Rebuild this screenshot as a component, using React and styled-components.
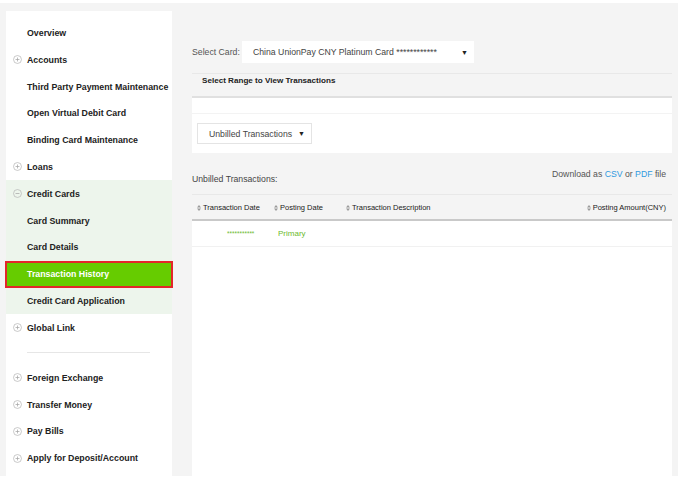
import React from 'react';
import styled, { createGlobalStyle } from 'styled-components';

const GlobalStyle = createGlobalStyle`
	html, body {
		margin: 0;
		padding: 0;
		background: #ffffff;
		font-family: "Liberation Sans", Arial, sans-serif;
	}
`;

const Page = styled.div`
	display: flex;
	box-sizing: border-box;
	margin-top: 3px;
	width: 678px;
	height: 473px;
	padding: 8px 0 0 6px;
	background: #f4f4f4;
`;

const Sidebar = styled.nav`
	width: 166px;
	flex-shrink: 0;
	background: #ffffff;
	padding-top: 8.6px;
`;

const Group = styled.div`
	background: ${p => (p.$open ? '#edf5ec' : 'transparent')};
`;

const NavItem = styled.div`
	display: flex;
	align-items: center;
	box-sizing: border-box;
	height: 26.8px;
	font-size: 8.8px;
	font-weight: bold;
	color: ${p => (p.$active ? '#ffffff' : '#222222')};
	background: ${p => (p.$active ? '#66cc00' : 'transparent')};
	border: ${p => (p.$active ? '2px solid #e3262a' : 'none')};
	margin: ${p => (p.$active ? '0 -1px' : '0')};
	padding-left: ${p => (p.$active ? '6px' : '7px')};
`;

const IconSlot = styled.span`
	display: inline-flex;
	align-items: center;
	width: 14px;
	flex-shrink: 0;
`;

const Divider = styled.div`
	height: 23.2px;
	display: flex;
	align-items: center;
	padding: 0 22px 0 21px;

	&::after {
		content: '';
		flex: 1;
		height: 1px;
		background: #e6e6e6;
	}
`;

const Main = styled.main`
	flex: 1;
	padding: 30px 6px 0 20px;
	display: flex;
	flex-direction: column;
`;

const CardRow = styled.div`
	display: flex;
	align-items: center;
`;

const Label = styled.span`
	width: 50px;
	font-size: 8.7px;
	color: #555555;
`;

const SelectBox = styled.div`
	display: flex;
	align-items: center;
	justify-content: space-between;
	box-sizing: border-box;
	width: ${p => p.$width}px;
	height: ${p => p.$height}px;
	padding: 0 6px 0 11px;
	background: #ffffff;
	border: ${p => (p.$bordered ? '1px solid #e4e4e4' : 'none')};
	font-size: 8.7px;
	color: #444444;
`;

const Caret = styled.span`
	font-size: 7px;
	color: #222222;
`;

const RangePanel = styled.section`
	margin-top: 10px;
	border-top: 1px solid #e8e8e8;
`;

const PanelHead = styled.div`
	height: 24px;
	box-sizing: border-box;
	padding: 2px 0 0 10px;
	font-size: 8.1px;
	line-height: 10px;
	font-weight: bold;
	color: #222222;
	border-bottom: 2px solid #e0e0e0;
`;

const Spacer = styled.div`
	height: 15px;
	background: #ffffff;
	border-bottom: 1px solid #f3f3f3;
`;

const PanelBody = styled.div`
	height: 39px;
	padding: 9px 0 0 5px;
	box-sizing: border-box;
	background: #ffffff;
`;

const ListHead = styled.div`
	display: flex;
	justify-content: space-between;
	height: 41px;
	padding: 0 6px 0 0;
	font-size: 8.7px;
	color: #444444;
`;

const ListTitle = styled.span`
	align-self: flex-end;
	margin-bottom: 10px;
`;

const Download = styled.span`
	margin-top: 16px;
	color: #555555;
`;

const Link = styled.a`
	color: #2f9ae0;
	text-decoration: none;
`;

const TableWrap = styled.div`
	flex: 1;
	background: #ffffff;
	border-top: 1px solid #e8e8e8;
`;

const Table = styled.table`
	width: 100%;
	border-collapse: collapse;
`;

const Th = styled.th`
	height: 24px;
	padding: 0 ${p => (p.$right ? '6px' : '0')} 0 ${p => p.$pad || 0}px;
	background: #f4f4f4;
	border-bottom: 2px solid #c9c9c9;
	font-size: 7.5px;
	font-weight: normal;
	color: #1a1a1a;
	text-align: ${p => (p.$right ? 'right' : 'left')};
	white-space: nowrap;
	width: ${p => (p.$width ? p.$width + 'px' : 'auto')};
`;

const Td = styled.td`
	height: 25px;
	padding: 0 0 0 ${p => p.$pad || 0}px;
	border-bottom: 1px solid #f1f1f1;
	font-size: ${p => (p.$masked ? '6.4px' : '8px')};
	color: #6dba2f;
`;

const SortIcon = () => (
	<svg width="4" height="6" viewBox="0 0 4 6" style={{ marginRight: 2, verticalAlign: 'middle' }}>
		<path d="M2 0 L4 2.4 H0 Z M2 6 L4 3.6 H0 Z" fill="#9a9a9a" />
	</svg>
);

const Toggle = ({ open }) => (
	<svg width="9" height="9" viewBox="0 0 10 10">
		<circle cx="5" cy="5" r="4.4" fill="none" stroke="#b5b5b5" strokeWidth="0.8" />
		<path d={open ? 'M2.8 5 H7.2' : 'M2.8 5 H7.2 M5 2.8 V7.2'} stroke="#a5a5a5" strokeWidth="0.8" />
	</svg>
);

const Item = ({ children, icon, active }) => (
	<NavItem $active={active}>
		<IconSlot>{icon && <Toggle open={icon === 'minus'} />}</IconSlot>
		{children}
	</NavItem>
);

export default function App() {
	return (
		<>
			<GlobalStyle />
			<Page>
				<Sidebar>
					<Item>Overview</Item>
					<Item icon="plus">Accounts</Item>
					<Item>Third Party Payment Maintenance</Item>
					<Item>Open Virtual Debit Card</Item>
					<Item>Binding Card Maintenance</Item>
					<Item icon="plus">Loans</Item>
					<Group $open>
						<Item icon="minus">Credit Cards</Item>
						<Item>Card Summary</Item>
						<Item>Card Details</Item>
						<Item active>Transaction History</Item>
						<Item>Credit Card Application</Item>
					</Group>
					<Item icon="plus">Global Link</Item>
					<Divider />
					<Item icon="plus">Foreign Exchange</Item>
					<Item icon="plus">Transfer Money</Item>
					<Item icon="plus">Pay Bills</Item>
					<Item icon="plus">Apply for Deposit/Account</Item>
				</Sidebar>
				<Main>
					<CardRow>
						<Label>Select Card:</Label>
						<SelectBox $width={232} $height={22}>
							<span>China UnionPay CNY Platinum Card ************</span>
							<Caret>▼</Caret>
						</SelectBox>
					</CardRow>
					<RangePanel>
						<PanelHead>Select Range to View Transactions</PanelHead>
						<Spacer />
						<PanelBody>
							<SelectBox $width={115} $height={21} $bordered>
								<span>Unbilled Transactions</span>
								<Caret>▼</Caret>
							</SelectBox>
						</PanelBody>
					</RangePanel>
					<ListHead>
						<ListTitle>Unbilled Transactions:</ListTitle>
						<Download>
							Download as <Link href="#">CSV</Link> or <Link href="#">PDF</Link> file
						</Download>
					</ListHead>
					<TableWrap>
						<Table>
							<thead>
								<tr>
									<Th $pad={5} $width={77}><SortIcon />Transaction Date</Th>
									<Th $width={72}><SortIcon />Posting Date</Th>
									<Th><SortIcon />Transaction Description</Th>
									<Th $right><SortIcon />Posting Amount(CNY)</Th>
								</tr>
							</thead>
							<tbody>
								<tr>
									<Td $pad={35} $masked>***********</Td>
									<Td $pad={4}>Primary</Td>
									<Td />
									<Td />
								</tr>
							</tbody>
						</Table>
					</TableWrap>
				</Main>
			</Page>
		</>
	);
}
